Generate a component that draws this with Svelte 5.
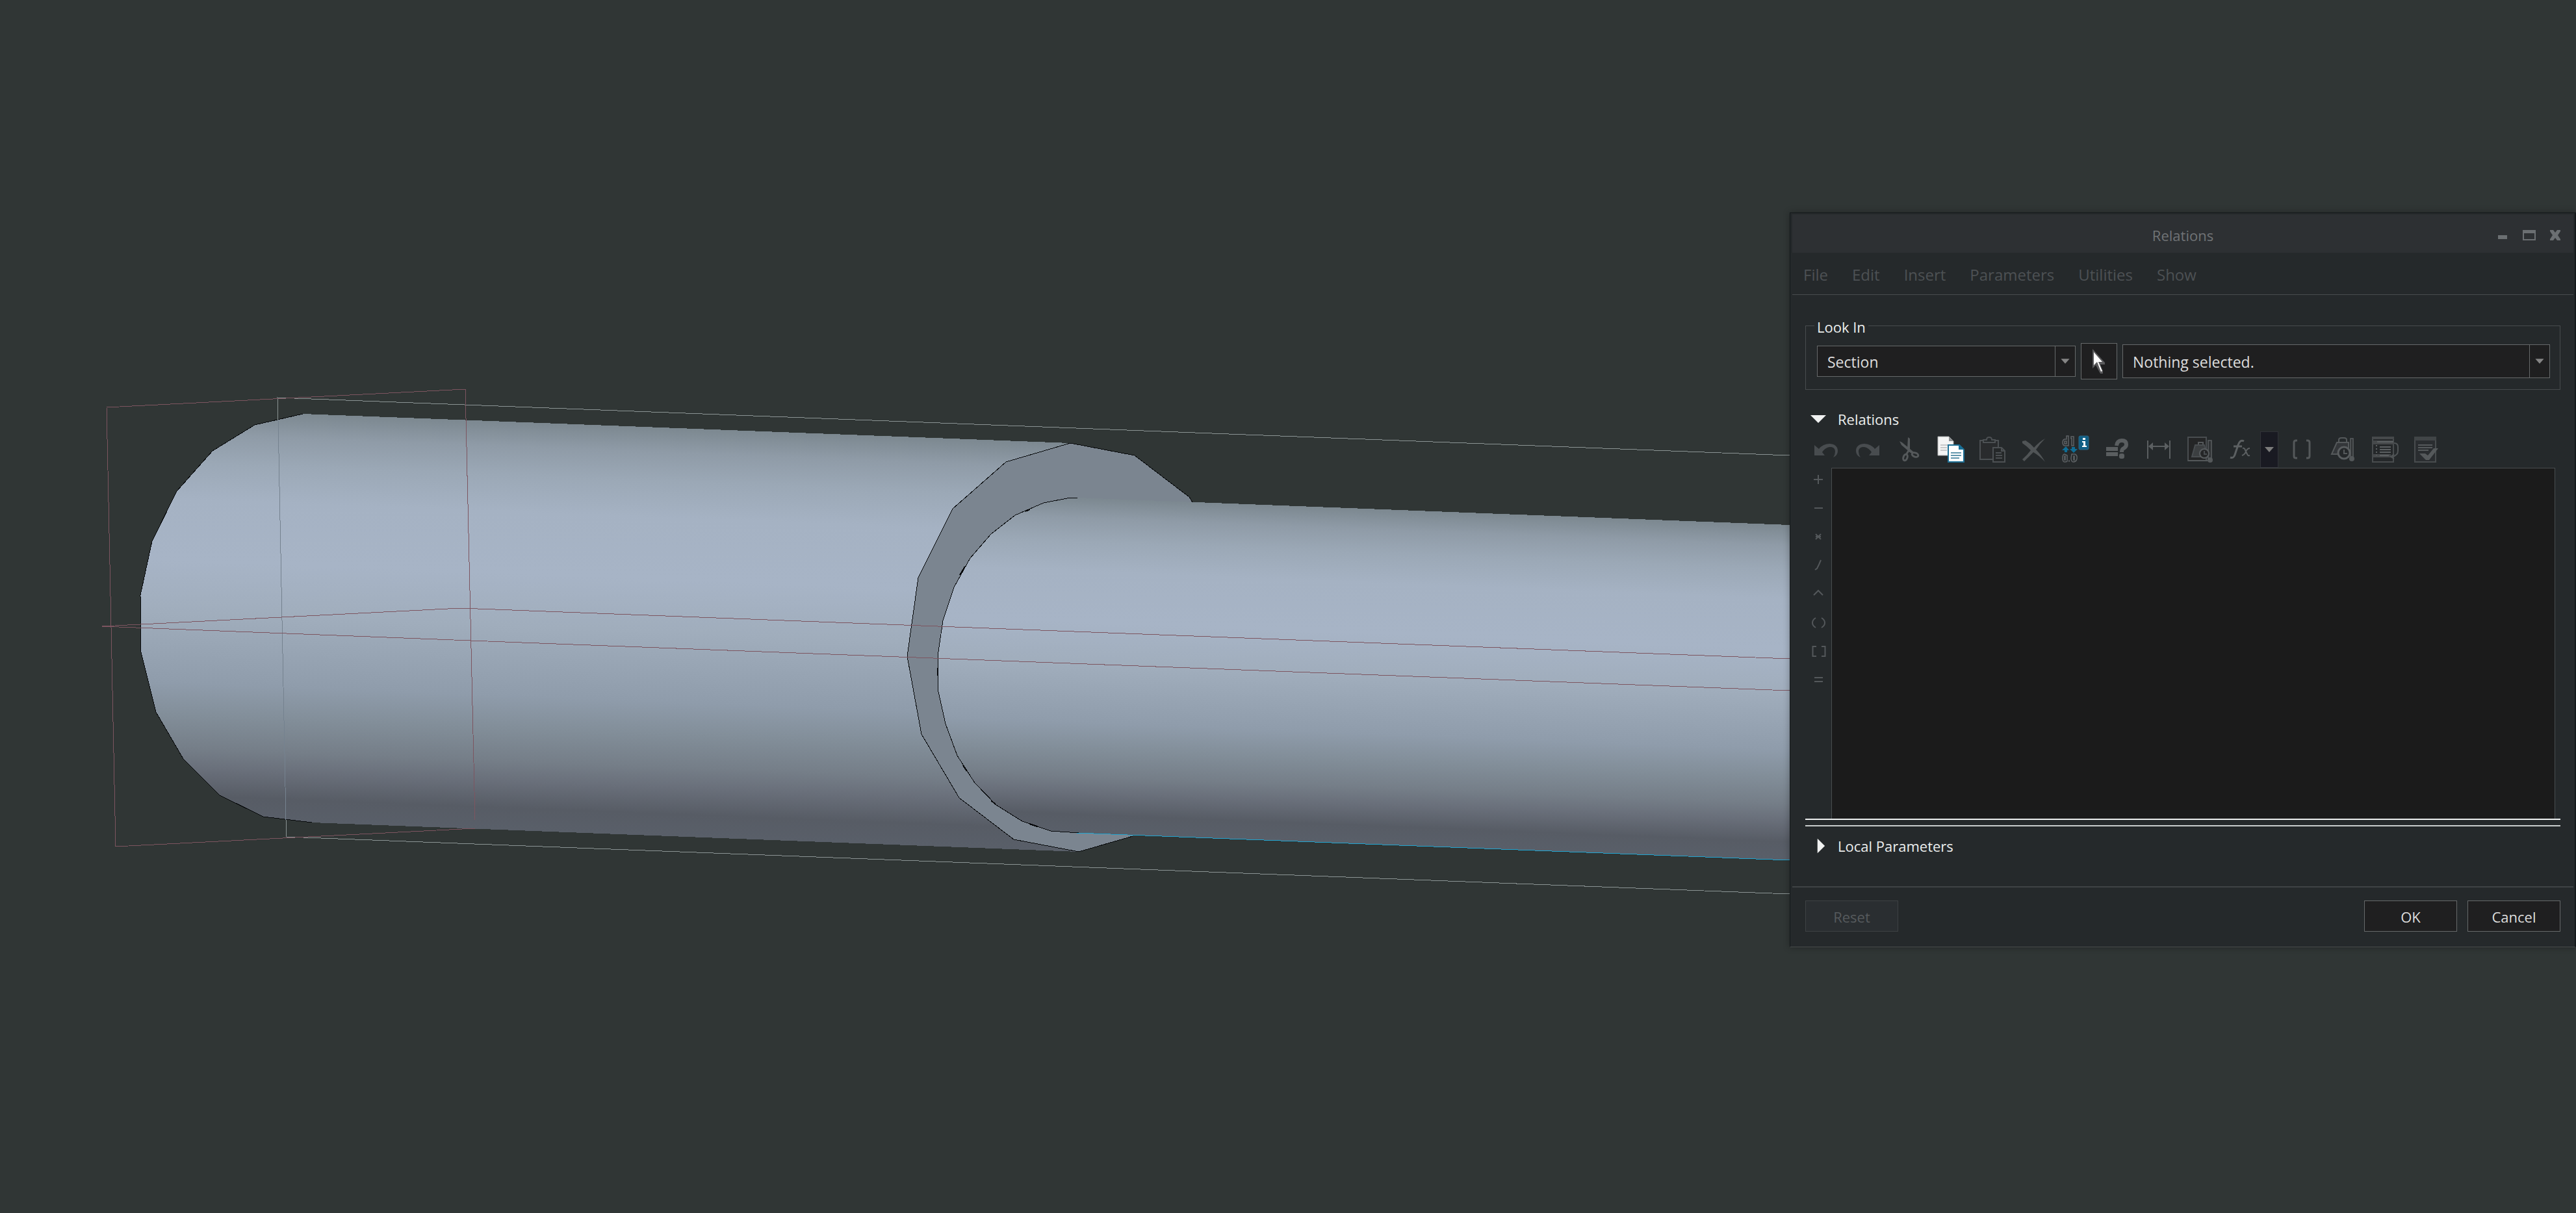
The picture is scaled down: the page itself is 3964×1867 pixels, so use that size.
<script lang="ts">
  const menus = ['File', 'Edit', 'Insert', 'Parameters', 'Utilities', 'Show'];
  const operators = [
    { name: 'Plus', d: 'M10 15h14M17 8v14' },
    { name: 'Minus', d: 'M11 15h13' },
    { name: 'Multiply', d: 'M13 11l8 8M21 11l-8 8M13 15h8' },
    { name: 'Divide', d: 'M21 7l-3 7l-3 6l-3 2' },
    { name: 'Power', d: 'M10 17l7-7l7 7' },
    { name: 'Parentheses', d: 'M13 8q-5 3-5 7.500t5 7.500M22 8q5 3 5 7.500t-5 7.500' },
    { name: 'Brackets', d: 'M14 8H8.500v15H14M22 8h5.500v15H22' },
    { name: 'Equals', d: 'M11 12h13M11 18h13' },
  ];
  let scope = $state('Section');
  let target = $state('Nothing selected.');
  let text = $state('');
  let open = $state(true);
  let localOpen = $state(false);
</script>

<main>
  <svg class="viewport" viewBox="0 0 3964 1867" preserveAspectRatio="xMinYMin slice" role="img" aria-label="Model view">
    <defs>
      <linearGradient id="big" gradientUnits="userSpaceOnUse" x1="466" y1="637" x2="442" y2="1265">
        <stop offset="0" stop-color="#7c8890" />
        <stop offset=".06" stop-color="#8f9ba7" />
        <stop offset=".13" stop-color="#9ba8b6" />
        <stop offset=".22" stop-color="#a5b2c3" />
        <stop offset=".37" stop-color="#a7b4c6" />
        <stop offset=".5" stop-color="#a0adbc" />
        <stop offset=".67" stop-color="#8f9cab" />
        <stop offset=".75" stop-color="#828e99" />
        <stop offset=".83" stop-color="#757e88" />
        <stop offset=".88" stop-color="#696f7a" />
        <stop offset=".945" stop-color="#575c65" />
        <stop offset="1" stop-color="#595f69" />
      </linearGradient>
      <linearGradient id="small" href="#big" gradientUnits="userSpaceOnUse" x1="1658" y1="766" x2="1638" y2="1281" />
    </defs>
    <g shape-rendering="crispEdges">
      <path fill="url(#big)" d="M466 637L392 654L327 694L272 756L234 833L216 916L217 1004L240 1096L282 1168L338 1224L405 1257L480 1266L1660 1311L1700 1000L1647 682Z" />
      <path class="edge" d="M466 637L392 654L327 694L272 756L234 833L216 916L217 1004L240 1096L282 1168L338 1224L405 1257L480 1266" />
      <path fill="#7b8590" d="M1835 773L1830 765L1746 701L1647 682L1548 711L1466 783L1413 889L1396 1010L1418 1130L1476 1228L1560 1292L1660 1311L1743 1287Z" />
      <path class="edge" d="M1835 773L1830 765L1746 701L1647 682L1548 711L1466 783L1413 889L1396 1010L1418 1130L1476 1228L1560 1292L1660 1311L1743 1287" />
      <path fill="url(#small)" d="M2780 809L1658 766L1606 774L1562 793L1525 822L1493 859L1468 904L1451 955L1443 1010L1443 1060L1455 1114L1473 1163L1500 1205L1533 1239L1573 1264L1617 1279L1660 1282L2780 1325Z" />
      <path class="edge" d="M1658 766L1647 766L1606 774L1562 793L1525 822L1493 859L1468 904L1451 955L1443 1010L1443 1060L1455 1114L1473 1163L1500 1205L1533 1239L1573 1264L1617 1279L1660 1282" />
      <path class="edge heavy" d="M1485 872L1477 885M1443 1028V1040M1482 1178L1488 1187M1525 1232L1532 1238M1584 1268L1596 1272M1578 787L1585 784" />
      <path class="wire blue" d="M1657 1282L2780 1325" />
      <path class="wire grey" d="M2780 702L427 612L428 646M440 1262L441 1288L2780 1377" />
      <path class="wire slate" d="M428 646L440 1262" />
      <path class="wire red" d="M164 627L716 599L731 1262M178 1303L731 1275M164 627L178 1303M157 964L709 936L2780 1015M157 964L724 986L2780 1064" />
    </g>
  </svg>

  <section class="dialog" aria-labelledby="dialog-title">
    <header class="titlebar">
      <h1 id="dialog-title">Relations</h1>
      <div class="window-buttons">
        <button type="button" aria-label="Minimize"><svg width="20" height="20" viewBox="0 0 20 20"><path fill="#6b6f72" d="M2 10h14v6H2z" /></svg></button>
        <button type="button" aria-label="Maximize"><svg width="20" height="20" viewBox="0 0 20 20"><path fill="#6b6f72" fill-rule="evenodd" d="M0 2h20v16H0zM2 7v9h16V7z" /></svg></button>
        <button type="button" aria-label="Close"><svg width="20" height="20" viewBox="0 0 20 20"><path fill="#6b6f72" d="M2 2h5l3 4 3-4h5v2l-4 6 4 6v2h-5l-3-4-3 4H2v-2l4-6-4-6z" /></svg></button>
      </div>
    </header>

    <nav class="menubar" aria-label="Menu">
      {#each menus as menu}
        <button type="button">{menu}</button>
      {/each}
    </nav>

    <div class="body">
      <fieldset>
        <legend>Look In</legend>
        <div class="look-in">
          <div class="combo scope">
            <select aria-label="Object type" bind:value={scope}><option>Section</option></select>
            <svg class="arrow" width="32" height="16" viewBox="0 0 32 16" aria-hidden="true"><path fill="#858585" d="M9 4h14l-7 8z" /></svg>
          </div>
          <button type="button" class="pick" aria-label="Select object">
            <svg width="24" height="46" viewBox="0 0 24 46">
              <path d="M2 4v30l5-5l7 13h4v-4l-4-10h7v-3z" fill="#5a5a5c" />
              <path d="M4 9v20l5-5l6 15l2-1l-6-14h6z" fill="#fff" />
            </svg>
          </button>
          <div class="combo target">
            <select aria-label="Object" bind:value={target}><option>Nothing selected.</option></select>
            <svg class="arrow" width="32" height="16" viewBox="0 0 32 16" aria-hidden="true"><path fill="#858585" d="M9 4h14l-7 8z" /></svg>
          </div>
        </div>
      </fieldset>

      <button type="button" class="section-head" aria-expanded={open} onclick={() => (open = !open)}>
        <svg width="36" height="24" viewBox="0 0 36 24" aria-hidden="true"><path fill="#f0f1f1" d={open ? 'M0 6h24L12 18z' : 'M10 0v24l12-12z'} /></svg>
        Relations
      </button>

      {#if open}
        <div class="toolbar" role="toolbar" aria-label="Relations tools">
          <button type="button" aria-label="Undo">
            <svg viewBox="0 0 44 44"><path fill="#484c4f" d="M4 15l7 6C19 10 40 10 40 24q0 7-7 10q3-4 3-9C36 16 23 15 16 26l4 5H4z" /></svg>
          </button>
          <button type="button" aria-label="Redo">
            <svg viewBox="0 0 44 44"><path fill="#484c4f" d="M40 15l-7 6C25 10 4 10 4 24q0 7 7 10q-3-4-3-9C8 16 21 15 28 26l-4 5h16z" /></svg>
          </button>
          <button type="button" aria-label="Cut">
            <svg viewBox="0 0 44 44" fill="none" stroke="#55595b"><path fill="#55595b" stroke="none" d="M20 3l3 2v19l-4-3zM7 9l4 2 17 14-4 2-14-12z" /><ellipse cx="16" cy="34" rx="3" ry="5" stroke-width="3" transform="rotate(20 16 34)" /><ellipse cx="31" cy="30" rx="5" ry="3" stroke-width="3" transform="rotate(20 31 30)" /><path stroke-width="3" d="M17 30l5-8M28 27l-6-3" /></svg>
          </button>
          <button type="button" aria-label="Copy">
            <svg viewBox="0 0 44 44"><path fill="#f4f4f4" stroke="#a9abac" d="M2 2h17l7 7v22H2z" /><path fill="#8c8f91" d="M19 2v7h7z" /><path stroke="#b9bbbc" stroke-width="1.500" d="M6 15h13M6 19h10M6 23h10" /><path fill="#fff" stroke="#1d6f94" stroke-width="2" d="M18 15h17l7 7v19H18z" /><path fill="#176f96" d="M34 14v8h8z" /><path stroke="#2c7391" stroke-width="1.500" d="M22 27h16M22 31h16M22 35h13" /></svg>
          </button>
          <button type="button" aria-label="Paste">
            <svg viewBox="0 0 44 44" fill="none" stroke="#4c5053" stroke-width="2"><path fill="#292b2d" d="M3 8h28v29H3z" /><path fill="#25292b" d="M8 11V7h5q0-4 4-4t4 4h5v4z" /><path fill="#252829" d="M23 19h13l5 5v17H23z" /><path d="M27 27h9M27 31h10M27 35h10M36 19v5h5" /></svg>
          </button>
          <button type="button" aria-label="Delete">
            <svg viewBox="0 0 44 44"><path fill="#505456" d="M4 9l5-1q7 4 13 11Q30 10 39 5Q31 13 25 22q8 8 14 19Q31 32 21 26q-8 8-14 14l-3-3q8-7 13-14Q10 16 4 12z" /></svg>
          </button>
          <button type="button" aria-label="Switch dimensions">
            <svg viewBox="0 0 44 44" fill="none" stroke="#5e6265" stroke-width="1.500"><path d="M8 1h3v15H5q-3-1-3-5t3-5h3zM5 9v4h3V9zM15 2h4v14h-3V5h-1zM5 29q-3 0-3 6t3 6 4-1V31zM5 32v6h1v-6zM12 38v3M16 29h5q4 2 3 7t-6 5q-3-1-3-6zM19 32v6h1v-6z" /><path fill="#0f6d95" stroke="none" d="M1 23l6-6 5 6H9v3H5v-3zM13 21h3v-3h5v3h4l-6 6z" /><rect x="27" y="1" width="15" height="21" rx="2" fill="#105f85" stroke="#2c6783" stroke-width="1" /><path fill="#fff" stroke="none" d="M33 4h4v3h-4zM32 9h5v7h2v2h-7v-2h2v-5h-2z" /></svg>
          </button>
          <button type="button" aria-label="Evaluate">
            <svg viewBox="0 0 44 44" fill="#5a5e60"><path d="M5 18h18v6H5zM5 26h18v6H5z" /><path fill="none" stroke="#5a5e60" stroke-width="6" d="M21 16q1-8 8-8t7 6q0 4-4 6q-3 1-3 6" /><rect x="25" y="28" width="8" height="8" rx="3" /></svg>
          </button>
          <button type="button" aria-label="Display dimension">
            <svg viewBox="0 0 44 44" fill="none" stroke="#5b5f61" stroke-width="2"><path d="M5 8v28M39 8v28M8 17h28" /><path fill="#5b5f61" stroke="none" d="M6 17l7-6v12zM38 17l-7-6v12z" /></svg>
          </button>
          <button type="button" aria-label="Mass properties">
            <svg viewBox="0 0 44 44" fill="none" stroke="#494d50" stroke-width="2"><path fill="#242526" d="M3 39V3h28v36z" /><path d="M14 15h14l4 18H9z" fill="#3c3f41" /><path d="M19 14v-3h7v3" stroke="#54585a" /><path stroke="#5a5e60" stroke-width="1.500" fill="#303335" d="M34 8h5v29h-5z" /><circle cx="28" cy="28" r="7" fill="#252627" stroke="#585c5e" /><path d="M28 24v5h4" /><circle cx="37" cy="38" r="4" fill="#54585a" stroke="none" /><path stroke="#54585a" d="M3 39h30" /></svg>
          </button>
          <button type="button" class="fx" aria-label="Insert function">
            <svg viewBox="0 0 44 44" fill="none" stroke="#5c6062" stroke-width="2"><path stroke-width="3" d="M27 9q-6-3-9 6l-5 15q-2 6-7 4M11 17h13" /><path d="M25 20q3-1 4 3l3 6q1 3 4 2M36 20q-4 0-6 5t-6 6" /></svg>
          </button>
          <button type="button" class="drop" aria-label="Function list">
            <svg width="14" height="8" viewBox="0 0 14 8"><path fill="#7c7c7c" d="M0 0h14L7 8z" /></svg>
          </button>
          <button type="button" aria-label="Insert brackets">
            <svg viewBox="0 0 44 44" fill="none" stroke="#54585a" stroke-width="3"><path d="M15 8h-2q-3 0-3 3v21q0 3 3 3h2M29 8h2q3 0 3 3v21q0 3-3 3h-2" /></svg>
          </button>
          <button type="button" aria-label="Units">
            <svg viewBox="0 0 44 44" fill="none" stroke="#55595b" stroke-width="2"><path fill="#34373a" d="M12 11h18v18H4z" /><path d="M15 11V7q0-3 4-3h4q4 0 4 3v4" /><path stroke="#5a5e60" stroke-width="1.500" fill="#303335" d="M33 5h4v30h-4z" /><circle cx="23" cy="27" r="9" fill="#25282a" stroke="#595d5f" stroke-width="3" /><path d="M23 22v6h5" /><circle cx="35" cy="36" r="4" fill="#54585a" stroke="none" /></svg>
          </button>
          <button type="button" aria-label="Parameter table">
            <svg viewBox="0 0 44 44" fill="none" stroke="#484c4e" stroke-width="2"><path fill="#25282a" d="M3 3h32v38H3z" /><path fill="#46494b" stroke="none" d="M3 2h33v4H3zM3 8h33v6H3zM3 29h28v5H3z" /><path stroke="#5c6062" d="M10 10h25M14 18h17M14 22h17M14 26h17M14 31h14" /><path stroke="#5c6062" stroke-dasharray="2 3" d="M9 15v16" /><path stroke="#505456" d="M36 12q6 0 6 6v6q0 7-9 9M36 29l-5 4 5 3" /></svg>
          </button>
          <button type="button" aria-label="Verify relations">
            <svg viewBox="0 0 44 44" fill="none" stroke="#484c4e" stroke-width="2"><path fill="#2a2d30" d="M4 3h32v38H4z" /><path fill="#414547" stroke="none" d="M3 2h34v6H3z" /><path stroke="#55595b" d="M9 15h22M9 19h22M9 23h16" /><path fill="#55595b" stroke="none" d="M11 28h9l4 3 9-11h7L26 38h-5z" /></svg>
          </button>
        </div>

        <div class="editor">
          <div class="operators">
            {#each operators as op}
              <button type="button" aria-label={op.name}>
                <svg width="34" height="32" viewBox="0 0 34 32" fill="none" stroke="#54585b" stroke-width="2"><path d={op.d} /></svg>
              </button>
            {/each}
          </div>
          <textarea aria-label="Relations text" spellcheck="false" bind:value={text}></textarea>
        </div>
      {/if}

      <div class="splitter" role="separator"></div>

      <button type="button" class="section-head local" aria-expanded={localOpen} onclick={() => (localOpen = !localOpen)}>
        <svg width="36" height="24" viewBox="0 0 36 24" aria-hidden="true"><path fill="#f0f1f1" d={localOpen ? 'M0 7h24L12 19z' : 'M4 0v24l12-12z'} /></svg>
        Local Parameters
      </button>
    </div>

    <footer>
      <button type="button" disabled>Reset</button>
      <span class="spacer"></span>
      <button type="button">OK</button>
      <button type="button">Cancel</button>
    </footer>
  </section>
</main>

<style>
  :global(body) {
    margin: 0;
    background: #303635;
  }
  main {
    position: relative;
    min-height: 100vh;
    overflow: hidden;
    font: 22px/30px 'Open Sans', 'Noto Sans', sans-serif;
    color: #eceeee;
  }
  .viewport {
    position: absolute;
    inset: 0;
    width: 100%;
    height: 100%;
  }
  .edge {
    fill: none;
    stroke: #07090b;
    stroke-width: 1;
  }
  .heavy {
    stroke-width: 2;
  }
  .wire {
    fill: none;
    stroke-width: 1;
  }
  .blue {
    stroke: #22a5d0;
  }
  .grey {
    stroke: #8b9494;
  }
  .slate {
    stroke: #75828f;
  }
  .red {
    stroke: #7d5560;
  }

  button,
  select,
  textarea {
    box-sizing: border-box;
    margin: 0;
    padding: 0;
    border: 0;
    border-radius: 0;
    background: none;
    color: inherit;
    font: inherit;
  }
  button {
    display: flex;
    align-items: center;
    justify-content: center;
  }
  svg {
    display: block;
    flex: none;
  }

  .dialog {
    position: absolute;
    top: 327px;
    right: 0;
    width: 1210px;
    box-sizing: border-box;
    border: 1px solid #14191b;
    border-right-width: 2px;
    border-bottom-color: #474b4b;
    padding: 2px 2px 0 3px;
    background: #25292b;
    box-shadow: 0 0 10px rgba(0, 0, 0, 0.3);
  }
  .titlebar {
    display: grid;
    grid-template-columns: 1fr auto 1fr;
    align-items: center;
    height: 59px;
    box-sizing: border-box;
    padding: 4px 18px 0;
    background: #2d3033;
  }
  h1 {
    grid-column: 2;
    margin: 0;
    font: inherit;
    color: #707376;
  }
  .window-buttons {
    display: flex;
    justify-content: flex-end;
    gap: 20px;
  }
  .menubar {
    display: flex;
    gap: 37px;
    height: 65px;
    box-sizing: border-box;
    padding: 4px 17px 0;
    border-bottom: 1px solid #484c4e;
    font-size: 24px;
    color: #4d5154;
  }
  .body {
    padding: 30px 20px 0;
  }

  fieldset {
    min-width: 0;
    margin: 0;
    padding: 10px 15px 15px 13px;
    border: 1px solid #484c4e;
  }
  legend {
    padding: 4px 4px 0;
  }
  .look-in {
    display: flex;
    align-items: center;
    gap: 8px;
    padding-left: 4px;
  }
  .combo {
    display: grid;
    align-items: center;
    height: 52px;
    box-sizing: border-box;
    border: 1px solid #66696a;
    background: #1f1f20;
    color: #dddddd;
    font-size: 23px;
  }
  .combo select {
    grid-area: 1 / 1;
    width: 100%;
    height: 100%;
    padding: 2px 48px 0 15px;
    appearance: none;
  }
  .arrow {
    grid-area: 1 / 1;
    justify-self: end;
    height: 100%;
    border-left: 1px solid #66696a;
    pointer-events: none;
    width: 30px;
  }
  .scope {
    flex: 0 0 398px;
    height: 48px;
  }
  .target {
    flex: 1;
  }
  .pick {
    width: 56px;
    height: 56px;
    border: 1px solid #66696a;
    background: #1f1f20;
  }

  .section-head {
    justify-content: flex-start;
    height: 32px;
    margin-top: 29px;
    padding-left: 8px;
    gap: 6px;
  }
  .section-head.local {
    margin-top: 14px;
    padding-left: 15px;
    gap: 1px;
    margin-bottom: 46px;
  }
  .local svg {
    width: 34px;
  }
  .toolbar {
    display: flex;
    height: 56px;
    margin-top: 3px;
  }
  .toolbar button {
    width: 64px;
    height: 56px;
  }
  .toolbar button svg {
    width: 44px;
    height: 44px;
  }
  .toolbar .fx {
    width: 60px;
  }
  .toolbar .drop {
    width: 28px;
    margin-right: 4px;
    border: 1px solid #303238;
    background: #191a22;
  }
  .toolbar .drop svg {
    width: 14px;
    height: 8px;
  }

  .editor {
    display: flex;
    height: 540px;
    padding-right: 8px;
  }
  .operators {
    width: 40px;
  }
  .operators button {
    width: 40px;
    height: 44px;
    padding-bottom: 6px;
  }
  textarea {
    flex: 1;
    height: 100%;
    padding: 8px;
    border: 1px solid #484c4e;
    border-bottom: 0;
    background: #1b1b1b;
    resize: none;
  }
  .splitter {
    height: 8px;
    border-top: 2px solid #edefef;
    border-bottom: 2px solid #c9cdcd;
  }

  footer {
    display: flex;
    gap: 16px;
    padding: 20px 20px 23px;
    border-top: 2px solid #3f4345;
  }
  footer button {
    width: 143px;
    height: 48px;
    padding-top: 2px;
    border: 1px solid #66696a;
    background: #1f1f20;
    color: #dddddd;
  }
  footer button:disabled {
    border-color: #3d4143;
    background: #2a2e31;
    color: #565a5d;
  }
  .spacer {
    flex: 1;
  }
</style>
